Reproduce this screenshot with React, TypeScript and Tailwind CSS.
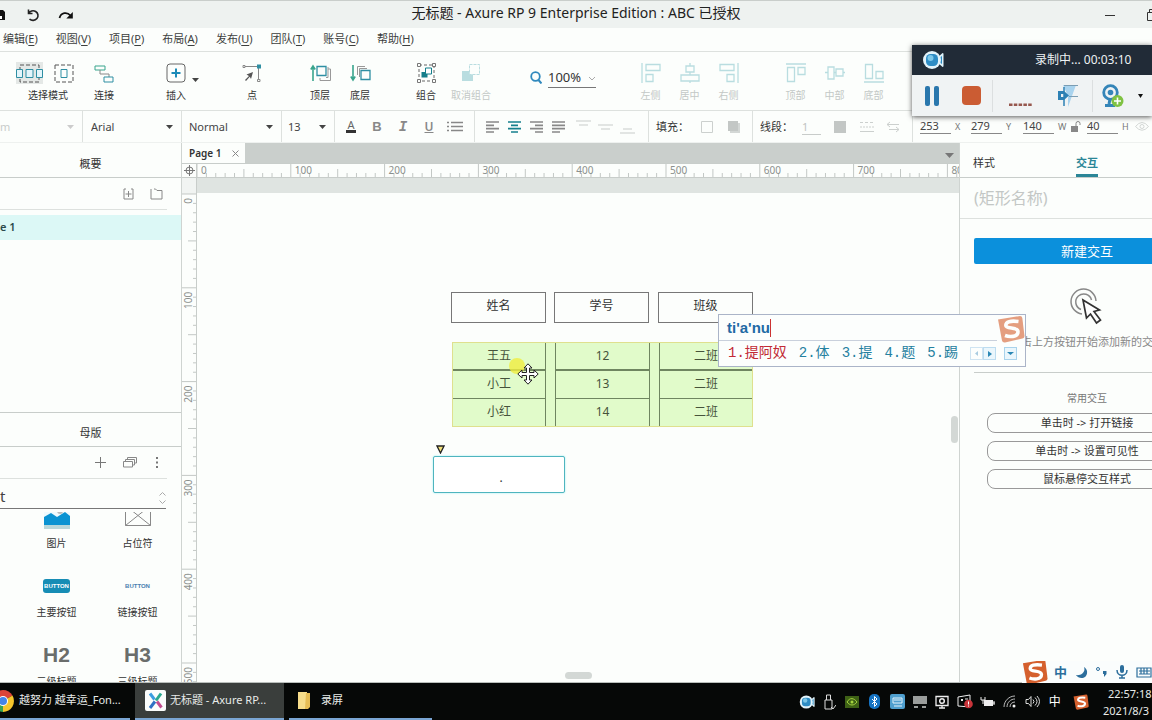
import React from "react";

type Kids = { children?: React.ReactNode };

const Svg = ({ w, h, box, className = "", children }: Kids & { w: number; h: number; box?: string; className?: string }) => (
  <svg width={w} height={h} viewBox={box ?? `0 0 ${w} ${h}`} fill="none" className={`shrink-0 ${className}`} aria-hidden="true">
    {children}
  </svg>
);

const Caret = ({ className = "text-[#444]" }: { className?: string }) => (
  <Svg w={7} h={4} className={className}>
    <path d="M0 0h7L3.500 4z" fill="currentColor" />
  </Svg>
);

/* ---------- Title bar and menu ---------- */

function TitleBar() {
  return (
    <header className="relative flex h-7 shrink-0 items-center border-t border-[#c9cecb] bg-[#eef2f0]">
      <button aria-label="保存" className="w-[5px] overflow-hidden">
        <Svg w={5} h={12}>
          <path d="M-8 1h11l2 2v8H-8z" fill="#111" />
          <path d="M-4 7h6v3h-6z" fill="#fff" />
        </Svg>
      </button>
      <button aria-label="撤销" className="ml-[21px]">
        <Svg w={14} h={14}>
          <path d="M2.500 1.500v4h4M2.500 5.500A5 4.800 0 1 1 3.500 11" stroke="#222" strokeWidth="1.600" />
        </Svg>
      </button>
      <button aria-label="重做" className="ml-[18px]">
        <Svg w={16} h={12}>
          <path d="M1.500 9C3 3.500 9 2.500 12.500 6.500" stroke="#111" strokeWidth="1.800" />
          <path d="M14.800 3v6.500H8.300z" fill="#111" />
        </Svg>
      </button>
      <h1 className="absolute inset-x-0 -top-px text-center text-[14px] leading-[26px] text-[#1f2221]">
        无标题 - Axure RP 9 Enterprise Edition : ABC 已授权
      </h1>
      <div className="ml-auto flex items-center gap-8">
        <button aria-label="最小化">
          <Svg w={10} h={10}><path d="M0 5.500h10" stroke="#333" /></Svg>
        </button>
        <button aria-label="最大化" className="w-[5px] overflow-hidden">
          <Svg w={11} h={12}><path d="M.5 3.500h8v8h-8zM2.500 3V.5h8v8H9" stroke="#333" /></Svg>
        </button>
      </div>
    </header>
  );
}

const MENUS: [string, string][] = [
  ["编辑", "E"], ["视图", "V"], ["项目", "P"], ["布局", "A"],
  ["发布", "U"], ["团队", "T"], ["账号", "C"], ["帮助", "H"],
];

function MenuBar() {
  return (
    <nav className="flex h-6 shrink-0 items-center gap-[18px] border-b border-[#dde1de] pl-[3px] text-[11px] text-[#3c3f3e]">
      {MENUS.map(([name, key]) => (
        <button key={key} className="whitespace-nowrap">
          {name}(<u className="underline-offset-2">{key}</u>)
        </button>
      ))}
    </nav>
  );
}

/* ---------- Main toolbar ---------- */

function Tool({ label, className, disabled, children }: Kids & { label: string; className: string; disabled?: boolean }) {
  return (
    <button disabled={disabled} className={`flex shrink-0 flex-col items-center gap-1 ${className} ${disabled ? "text-[#c3c8c6]" : "text-[#333]"}`}>
      <span className="flex h-[22px] items-center">{children}</span>
      <span className="whitespace-nowrap text-[10px] leading-[14px]">{label}</span>
    </button>
  );
}

const T = "#2f8fa3";
const P = "#b9dde0";

function Toolbar() {
  return (
    <div className="flex h-[59px] shrink-0 items-start border-b border-[#dde1de] pl-4 pt-[10px]">
      <div className="flex w-16 shrink-0 flex-col items-center gap-1 text-[10px] text-[#333]">
        <div className="flex w-full items-center gap-[11px]">
          <button aria-label="相交选择" className="flex h-[22px] bg-[#e4e8e6]">
            <Svg w={27} h={22}>
              <path d="M4 3h19v17H4z" stroke="#555" strokeDasharray="4 2" />
              <path d="M.5 7.500h6v8h-6zM10 7.500h7v8h-7zM20.500 7.500h6v8h-6z" fill="#e3f5fb" stroke={T} />
            </Svg>
          </button>
          <button aria-label="包含选择" className="flex h-[22px]">
            <Svg w={20} h={22}>
              <path d="M1 3h18v17H1z" stroke="#555" strokeDasharray="4 2" />
              <path d="M7 7.500h6v8H7z" stroke={T} />
            </Svg>
          </button>
        </div>
        <span className="leading-[14px]">选择模式</span>
      </div>
      <Tool label="连接" className="ml-1 w-10">
        <Svg w={20} h={19}>
          <path d="M1 2h10v4H1z" stroke="#39a58d" />
          <path d="M6 6v4h9v3" stroke="#888" />
          <path d="M10 13h9v5h-9z" stroke={T} />
        </Svg>
      </Tool>
      <Tool label="插入" className="ml-9 w-8">
        <Svg w={20} h={20}>
          <rect x="1" y="1" width="18" height="18" rx="3" stroke="#666" />
          <path d="M10 5.500v9M5.500 10h9" stroke="#1c8bb8" strokeWidth="2" />
        </Svg>
      </Tool>
      <button aria-label="插入选项" className="mt-4"><Caret /></button>
      <Tool label="点" className="ml-[33px] w-10">
        <Svg w={20} h={20}>
          <path d="M3 3.500h13.500V16" stroke="#888" />
          <path d="M1 2.500h2v2H1zM15.500 16.500h2.500v2h-2.500z" stroke="#888" />
          <path d="M15 1.500h4v4h-4z" fill={T} />
          <path d="M3 17l4-4-2.500-1.500L11 9l-2 7-1.200-2.200L4 18z" fill="#555" />
        </Svg>
      </Tool>
      <Tool label="顶层" className="ml-7 w-10">
        <Svg w={21} h={18}>
          <path d="M3 17V3M.8 5.500L3 2l2.200 3.500" stroke="#39a58d" strokeWidth="1.600" />
          <path d="M18 5h2.500v11.500H10V14M16 13.500h2V3" stroke="#999" />
          <path d="M7 2.500h9v9H7z" stroke={T} strokeWidth="1.300" />
        </Svg>
      </Tool>
      <Tool label="底层" className="w-10">
        <Svg w={21} h={18}>
          <path d="M3 1v14M.8 12.500L3 16l2.200-3.500" stroke="#39a58d" strokeWidth="1.600" />
          <path d="M7.500 11V2.500H15M9.500 13V4.500H17" stroke="#999" />
          <path d="M11 6.500h9v9h-9z" stroke={T} strokeWidth="1.300" />
        </Svg>
      </Tool>
      <Tool label="组合" className="ml-[26px] w-10">
        <Svg w={19} h={20}>
          <path d="M2 2h15v16H2z" stroke="#666" strokeDasharray="3 2" />
          <path d="M.5.500h3v3h-3zM15.500.500h3v3h-3zM.5 16.500h3v3h-3zM15.500 16.500h3v3h-3z" fill="#fcfefc" stroke="#777" />
          <path d="M4.500 9h6v5.500h-6z" fill="#157f8b" />
          <path d="M8.500 5h6v6h-6z" fill="#fff" stroke="#157f8b" />
        </Svg>
      </Tool>
      <Tool label="取消组合" className="w-[50px]" disabled>
        <Svg w={20} h={20}>
          <path d="M1 8h11v10H1z" fill={P} />
          <path d="M8.500 1.500h10v10h-10z" fill="#fcfefc" stroke={P} strokeDasharray="3 1" />
        </Svg>
      </Tool>
      <label className="ml-[34px] mt-1 flex shrink-0 items-center gap-[6px]">
        <Svg w={12} h={13}>
          <circle cx="5.500" cy="5.500" r="4.300" stroke="#3089bd" strokeWidth="1.800" />
          <path d="M8.500 9l3 3.500" stroke="#3089bd" strokeWidth="2" />
        </Svg>
        <span className="sr-only">缩放</span>
        <span className="flex w-12 items-center border-b border-[#777]">
          <select className="h-[21px] w-10 appearance-none bg-transparent text-[13px] leading-[20px] text-[#333]" defaultValue="100%">
            <option>100%</option>
          </select>
          <Svg w={8} h={5} className="mt-1"><path d="M1 1l3 3 3-3" stroke="#aaa" /></Svg>
        </span>
      </label>
      <Tool label="左侧" className="ml-[35px] w-[39px]" disabled>
        <Svg w={20} h={20}><path d="M1 0v20M5 1.500h14v6H5zM5 11.500h7v7H5z" stroke={P} strokeWidth="1.300" /></Svg>
      </Tool>
      <Tool label="居中" className="w-[39px]" disabled>
        <Svg w={20} h={20}><path d="M10 0v3M10 9v3M10 18v2M6 3h8v6H6zM1 12h18v6H1z" stroke={P} strokeWidth="1.300" /></Svg>
      </Tool>
      <Tool label="右侧" className="w-[39px]" disabled>
        <Svg w={20} h={20}><path d="M19 0v20M1 1.500h14v6H1zM8 11.500h7v7H8z" stroke={P} strokeWidth="1.300" /></Svg>
      </Tool>
      <Tool label="顶部" className="ml-7 w-[39px]" disabled>
        <Svg w={20} h={20}><path d="M0 1h20M1.500 4.500h7v14h-7zM12 4.500h7v7h-7z" stroke={P} strokeWidth="1.300" /></Svg>
      </Tool>
      <Tool label="中部" className="w-[39px]" disabled>
        <Svg w={20} h={20}><path d="M0 9.500h3M9 9.500h2M18 9.500h2M3 4h6v12H3zM11 6h7v7h-7z" stroke={P} strokeWidth="1.300" /></Svg>
      </Tool>
      <Tool label="底部" className="w-[39px]" disabled>
        <Svg w={20} h={20}><path d="M0 19h20M1.500 1.500h7v14h-7zM12 8.500h7v7h-7z" stroke={P} strokeWidth="1.300" /></Svg>
      </Tool>
    </div>
  );
}

/* ---------- Format bar ---------- */

function Pick({ label, value, className, faint }: { label: string; value: string; className: string; faint?: boolean }) {
  return (
    <label className={`flex h-full shrink-0 items-center border-r border-[#dde1de] pr-2 ${className}`}>
      <span className="sr-only">{label}</span>
      <select defaultValue={value} className={`h-5 min-w-0 flex-1 appearance-none bg-transparent text-[11px] leading-5 ${faint ? "text-[#c8ccca]" : "text-[#444]"}`}>
        <option>{value}</option>
      </select>
      <Caret className={faint ? "text-[#ccc]" : "text-[#444]"} />
    </label>
  );
}

function Fmt({ label, className, children }: Kids & { label: string; className: string }) {
  return (
    <button aria-label={label} className={`flex h-full shrink-0 items-center justify-center ${className}`}>
      {children}
    </button>
  );
}

function Num({ label, value, className }: { label: string; value: string; className: string }) {
  return (
    <label className={`flex shrink-0 items-baseline gap-1 text-[9px] leading-4 text-[#777] ${className}`}>
      <input defaultValue={value} className="h-4 w-[31px] border-b border-[#888] bg-transparent text-[11px] leading-[15px] text-[#444]" />
      {label}
    </label>
  );
}

const ALIGN: [string, string, string][] = [
  ["左对齐", "M0 1h13M0 4.300h8M0 7.600h13M0 11h8", "#888"],
  ["居中对齐", "M0 1h13M3 4.300h7M0 7.600h13M3 11h7", "#16808d"],
  ["右对齐", "M0 1h13M5 4.300h8M0 7.600h13M5 11h8", "#888"],
  ["两端对齐", "M0 1h13M0 4.300h13M0 7.600h13M0 11h8", "#888"],
];
const VALIGN: [string, string][] = [
  ["顶端", "M0 1h15M3 5h9"],
  ["中间", "M0 5h15M3 9h9"],
  ["底端", "M3 9h9M0 13h15"],
];

function FormatBar() {
  return (
    <div className="flex h-8 shrink-0 items-center overflow-hidden border-b border-[#eef1ef]">
      <Pick label="控件样式" value="m" className="w-[83px]" faint />
      <Pick label="字体" value="Arial" className="w-[99px] pl-2" />
      <Pick label="字重" value="Normal" className="w-[100px] pl-[7px]" />
      <Pick label="字号" value="13" className="w-[53px] pl-[6px]" />
      <div className="flex h-full w-[140px] shrink-0 border-r border-[#dde1de] pl-[3px]">
        <Fmt label="文字颜色" className="w-[26px]">
          <span className="border-b-[3px] border-[#333] px-px text-[11px] leading-[10px] text-[#666]">A</span>
        </Fmt>
        <Fmt label="粗体" className="w-[26px]"><b className="font-[Liberation_Sans] text-[13px] leading-5 text-[#888]">B</b></Fmt>
        <Fmt label="斜体" className="w-[26px]"><i className="font-[Liberation_Mono] text-[14px] font-bold leading-5 text-[#888]">I</i></Fmt>
        <Fmt label="下划线" className="w-[26px]"><u className="text-[12px] font-semibold leading-5 text-[#888]">U</u></Fmt>
        <Fmt label="项目符号" className="w-[26px]">
          <Svg w={16} h={11}>
            <path d="M0 1.500h2M0 5.500h2M0 9.500h2M4 1.500h12M4 5.500h12M4 9.500h12" stroke="#888" strokeWidth="1.600" />
          </Svg>
        </Fmt>
      </div>
      <div className="flex h-full w-[174px] shrink-0 border-r border-[#dde1de] pl-[6px]">
        {ALIGN.map(([n, d, c]) => (
          <Fmt key={n} label={n} className="w-[22px]">
            <Svg w={13} h={12}><path d={d} stroke={c} strokeWidth="1.700" /></Svg>
          </Fmt>
        ))}
        <span className="w-[3px]" />
        {VALIGN.map(([n, d]) => (
          <Fmt key={n} label={n} className="w-[22px]">
            <Svg w={15} h={14}><path d={d} stroke="#c8ccca" /></Svg>
          </Fmt>
        ))}
      </div>
      <div className="flex h-full w-[104px] shrink-0 items-center border-r border-[#dde1de] pl-[7px] text-[11px] leading-5 text-[#333]">
        <span className="w-[45px]">填充：</span>
        <Fmt label="填充颜色" className="w-3"><Svg w={12} h={12}><path d="M.5.500h11v11H.5z" stroke="#ccd0ce" /></Svg></Fmt>
        <Fmt label="阴影" className="ml-[15px] w-3"><Svg w={12} h={12}><path d="M0 0h10v10H0z" fill="#c3c7c5" /><path d="M2 11h9V2" stroke="#d3d7d5" strokeWidth="2" /></Svg></Fmt>
      </div>
      <div className="flex h-full w-[160px] shrink-0 items-center border-r border-[#dde1de] pl-[7px] text-[11px] leading-5 text-[#333]">
        <span className="w-[42px]">线段：</span>
        <input aria-label="线宽" defaultValue="1" className="h-4 w-[19px] border-b border-[#c8ccca] bg-transparent leading-[15px] text-[#c0c4c2]" />
        <Fmt label="线条颜色" className="ml-[13px] w-3"><Svg w={12} h={12}><path d="M0 0h12v12H0z" fill="#c3c7c5" /></Svg></Fmt>
        <Fmt label="线型" className="ml-[14px] w-[14px]">
          <Svg w={14} h={12}><path d="M0 1.500h14" stroke="#ccd0ce" strokeDasharray="3 2" /><path d="M0 6h14" stroke="#ccd0ce" strokeDasharray="2 1" /><path d="M0 10.500h14" stroke="#ccd0ce" /></Svg>
        </Fmt>
        <Fmt label="箭头" className="ml-3 w-[14px]">
          <Svg w={14} h={12}><path d="M4 1L1 3.500 4 6M1 3.500h12M10 6l3 2.500-3 2.500M13 8.500H3" stroke="#ccd0ce" /></Svg>
        </Fmt>
      </div>
      <div className="flex shrink-0 items-center pl-[7px]">
        <Num label="X" value="253" className="w-[51px]" />
        <Num label="Y" value="279" className="w-[52px]" />
        <Num label="W" value="140" className="w-12" />
        <Fmt label="锁定宽高比" className="mr-[6px] w-[10px]">
          <Svg w={10} h={11}><path d="M0 5h7v6H0z" fill="#888" /><path d="M5 5V2.500a2 2 0 0 1 4 0V4" stroke="#888" /></Svg>
        </Fmt>
        <Num label="H" value="40" className="w-[48px]" />
        <Fmt label="可见性" className="w-[14px]">
          <Svg w={14} h={9}><path d="M.5 4.500Q7-3.500 13.500 4.500 7 12 .5 4.500z" stroke="#d3d7d5" /><circle cx="7" cy="4.500" r="2" stroke="#d3d7d5" /></Svg>
        </Fmt>
      </div>
    </div>
  );
}

/* ---------- Left panels ---------- */

function Widget({ label, children }: Kids & { label: string }) {
  return (
    <button className="flex h-[69px] w-[81px] flex-col items-center pt-[13px]">
      <span className="flex h-10 items-center">{children}</span>
      <span className="whitespace-nowrap text-[10px] leading-3 text-[#333]">{label}</span>
    </button>
  );
}

function LeftPanel() {
  return (
    <aside className="flex w-[182px] shrink-0 flex-col overflow-hidden border-r border-[#cfd4d1]">
      <section className="flex min-h-0 flex-1 flex-col">
        <h2 className="flex h-[35px] shrink-0 items-center justify-center border-b border-[#c8cdca] pt-2 text-[11px] leading-4 text-[#333]">概要</h2>
        <div className="mr-[14px] flex h-8 shrink-0 items-center justify-end gap-4 border-b border-[#dde1de] pr-[4px]">
          <button aria-label="添加页面">
            <Svg w={11} h={12}><path d="M3 1H1v10h9V1H8M5.500 3v6M2.500 6h6" stroke="#888" /></Svg>
          </button>
          <button aria-label="添加文件夹">
            <Svg w={13} h={12}><path d="M1 1v10h11V2.500H7L5.500 1H4" stroke="#888" /></Svg>
          </button>
        </div>
        <a href="#page-1" className="mt-[5px] block h-[25px] shrink-0 bg-[#dcf8f6] text-[11px] font-semibold leading-[24px] text-[#2b4a4b]">e 1</a>
      </section>
      <section className="flex h-[270px] shrink-0 flex-col border-t border-[#c8cdca]">
        <h2 className="flex h-[34px] shrink-0 items-center justify-center border-b border-[#c8cdca] pt-[6px] text-[11px] leading-4 text-[#333]">母版</h2>
        <div className="mr-[14px] flex h-8 shrink-0 items-center justify-end gap-[17px] border-b border-[#dde1de] pr-[8px]">
          <button aria-label="添加母版"><Svg w={11} h={11}><path d="M5.500 0v11M0 5.500h11" stroke="#777" /></Svg></button>
          <button aria-label="添加母版文件夹">
            <Svg w={14} h={11}><path d="M.5 4.500h9v5.500h-9zM2.500 4V2.500h9V8H10M4.500 2V.500h9V6H12" stroke="#888" /></Svg>
          </button>
          <button aria-label="更多"><Svg w={5} h={11}><path d="M2 0h2v2H2zM2 4.500h2v2H2zM2 9h2v2H2z" fill="#777" /></Svg></button>
        </div>
        <label className="mr-[15px] flex h-[30px] shrink-0 items-center border-b border-[#777]">
          <span className="sr-only">元件库</span>
          <select defaultValue="t" className="mt-1 h-6 flex-1 appearance-none bg-transparent text-[15px] leading-6 text-[#444]"><option>t</option></select>
          <Svg w={7} h={12} className="mt-2"><path d="M.5 3.500l3-3 3 3M.5 8.500l3 3 3-3" stroke="#aaa" /></Svg>
        </label>
        <div className="mt-[3px] min-h-0 flex-1 overflow-hidden">
          <div className="-mt-7 grid grid-cols-[81px_81px] pl-4">
            <Widget label="图片">
              <Svg w={26} h={26}>
                <path d="M0 6h26v18H0z" fill="#f0fafd" /><path d="M0 13l7-4 6 4 8-5 5 4v11H0z" fill="#0b93d2" />
                <circle cx="16" cy="7" r="3" fill="#bbb" /><path d="M0 21h26v4H0z" fill="#b9d7da" />
              </Svg>
            </Widget>
            <Widget label="占位符">
              <Svg w={26} h={24}><path d="M.5.500h25v20H.5zM.5.500l25 20M25.500.500l-25 20" stroke="#888" /></Svg>
            </Widget>
            <Widget label="主要按钮">
              <span className="flex h-[14px] w-[27px] items-center justify-center rounded-[3px] bg-[#178db5] font-[Liberation_Sans] text-[6px] font-bold leading-[14px] text-white">BUTTON</span>
            </Widget>
            <Widget label="链接按钮">
              <span className="font-[Liberation_Sans] text-[6px] font-bold leading-[14px] text-[#4b7fb0]">BUTTON</span>
            </Widget>
            <Widget label="二级标题"><b className="font-[Liberation_Sans] text-[21px] text-[#6a6d6b]">H2</b></Widget>
            <Widget label="三级标题"><b className="font-[Liberation_Sans] text-[21px] text-[#6a6d6b]">H3</b></Widget>
          </div>
        </div>
      </section>
    </aside>
  );
}

/* ---------- Canvas ---------- */

const UNIT = 9.38;

function TopRuler() {
  return (
    <svg className="h-[15px] min-w-0 flex-1" aria-hidden="true">
      {Array.from({ length: 140 }, (_, i) => {
        const x = i * UNIT;
        const len = i % 10 === 0 ? 15 : i % 5 === 0 ? 8 : 4;
        return <path key={i} d={`M${x} 13v-${len}`} stroke="#c3c8c5" />;
      })}
      {Array.from({ length: 14 }, (_, i) => (
        <text key={i} x={i * UNIT * 10 + 4} y="10" fontSize="10" fill="#8b908d">{i * 100}</text>
      ))}
    </svg>
  );
}

function SideRuler() {
  return (
    <svg className="w-[15px] shrink-0 border-r border-[#c8cdca]" height="100%" aria-hidden="true">
      <path d="M0 0h15v16H0z" fill="#f1f4f2" />
      {Array.from({ length: 80 }, (_, i) => {
        const y = 16 + i * UNIT;
        const len = i % 10 === 0 ? 15 : i % 5 === 0 ? 9 : 4;
        return <path key={i} d={`M15 ${y}h-${len}`} stroke="#c3c8c5" />;
      })}
      {Array.from({ length: 8 }, (_, i) => (
        <text key={i} transform={`translate(10 ${20 + i * UNIT * 10}) rotate(-90)`} textAnchor="end" fontSize="10" fill="#8b908d">{i * 100}</text>
      ))}
    </svg>
  );
}

const ROWS = [["王五", "12", "二班"], ["小工", "13", "二班"], ["小红", "14", "二班"]];

function Canvas() {
  return (
    <main className="flex min-w-0 flex-1 flex-col">
      <div className="flex h-5 shrink-0 items-stretch bg-[#cacfcc]">
        <div className="flex w-[63px] items-center justify-between bg-[#fcfefc] pl-[7px] pr-[6px]">
          <button className="whitespace-nowrap text-[10px] font-semibold leading-4 text-[#333]">Page 1</button>
          <button aria-label="关闭页面"><Svg w={7} h={7} className="mt-px"><path d="M.5.500l6 6M6.500.500l-6 6" stroke="#888" /></Svg></button>
        </div>
        <button aria-label="页面列表" className="ml-auto mr-[5px] mt-1"><Svg w={9} h={5}><path d="M0 0h9L4.500 5z" fill="#777" /></Svg></button>
      </div>
      <div className="flex h-[15px] shrink-0 border-y border-[#c8cdca]">
        <div className="flex w-[15px] shrink-0 items-center justify-center border-r border-[#c8cdca]">
          <Svg w={11} h={11}><circle cx="5.500" cy="5.500" r="3.500" stroke="#777" /><path d="M5.500 0v11M0 5.500h11" stroke="#777" /></Svg>
        </div>
        <TopRuler />
      </div>
      <div className="flex min-h-0 flex-1">
        <SideRuler />
        <div className="relative min-w-0 flex-1 overflow-hidden border-t-[15px] border-[#dfe4e1]">
          {/* free canvas: every node sits at its document position */}
          <div className="absolute left-[254px] top-[99px] flex h-[31px] w-[95px] items-center justify-center border border-[#777] pb-1 text-[12px] text-[#333]">姓名</div>
          <div className="absolute left-[357px] top-[99px] flex h-[31px] w-[95px] items-center justify-center border border-[#777] pb-1 text-[12px] text-[#333]">学号</div>
          <div className="absolute left-[461px] top-[99px] flex h-[31px] w-[95px] items-center justify-center border border-[#777] pb-1 text-[12px] text-[#333]">班级</div>
          <table className="absolute left-[255px] top-[149px] w-[301px] table-fixed border-separate border-spacing-0 border border-[#dfe08e] bg-[#e1fbca] text-center text-[12px] leading-[26px] text-[#46533b]">
            <colgroup><col className="w-[102px]" /><col className="w-[104px]" /><col className="w-[93px]" /></colgroup>
            <tbody>
              {ROWS.map((row, r) => (
                <tr key={r}>
                  {row.map((cell, c) => (
                    <td key={c} className={`p-0 ${c < 2 ? "pr-[9px]" : ""}`}>
                      <div className={`border-[#6f8560] ${c < 2 ? "border-r" : ""} ${c > 0 ? "border-l" : ""} ${r === 0 ? "border-b-2" : r === 1 ? "h-7 border-b" : "h-[27px]"}`}>{cell}</div>
                    </td>
                  ))}
                </tr>
              ))}
            </tbody>
          </table>
          <Svg w={9} h={9} className="absolute left-[239px] top-[252px]"><path d="M1 1h7L4.500 8z" fill="#f3e27a" stroke="#222" strokeWidth="1.300" /></Svg>
          <div className="absolute left-[236px] top-[263px] flex h-[37px] w-[132px] items-center justify-center rounded-[2px] border border-[#4fb5bf] bg-white pl-1 pt-[6px] text-[12px] text-[#333] shadow-[0_0_2px_#8feaf0]">.</div>
          <span className="absolute left-[312px] top-[165px] size-4 rounded-full bg-[#f0ee3e]/80" />
          <Svg w={22} h={22} className="absolute left-[320px] top-[170px]">
            <path d="M11 .8l4 4.200h-2.500v4.500H17V7l4.200 4-4.200 4v-2.500h-4.500V17H15l-4 4.200L7 17h2.500v-4.500H5V15L.8 11 5 7v2.500h4.500V5H7z" fill="#fff" stroke="#222" />
          </Svg>
          <span className="absolute right-[1px] top-[223px] h-[27px] w-[7px] rounded-sm bg-[#d3d8d5]" />
          <span className="absolute bottom-[3px] left-[368px] h-[7px] w-[27px] rounded-sm bg-[#d3d8d5]" />
        </div>
      </div>
    </main>
  );
}

/* ---------- Interaction panel ---------- */

function RightPanel() {
  return (
    <aside className="w-[193px] shrink-0 overflow-hidden border-l border-[#cfd4d1]">
      <div className="w-[254px]">
        <div className="flex h-[35px] items-end border-b border-[#c8cdca] pl-[13px] text-[11px] leading-4">
          <button className="pb-[6px] text-[#333]">样式</button>
          <button className="ml-[81px] border-b-[3px] border-[#2b8697] pb-[3px] font-semibold text-[#2b8697]">交互</button>
        </div>
        <div className="border-b border-[#dde1de] pl-[14px]">
          <input aria-label="形状名称" placeholder="(矩形名称)" className="h-10 w-full bg-transparent text-[16px] placeholder:text-[#c3c7c5]" />
        </div>
        <div className="pl-[14px] pt-[19px]">
          <button className="-mr-px block h-[26px] w-[226px] rounded-[2px] bg-[#0b90dc] text-[13px] leading-[26px] text-white">新建交互</button>
        </div>
        <div className="flex flex-col items-center pt-6">
          <Svg w={36} h={38}>
            <path d="M13 26A12.500 12.500 0 1 1 27 13" stroke="#888" strokeWidth="1.500" />
            <path d="M12 21.500A8 8 0 1 1 22.500 12" stroke="#888" strokeWidth="1.500" />
            <path d="M14 12l3.500 18 4-4 6 9 4-3-6.500-8.500 5.500-1.500z" fill="#fff" stroke="#333" strokeWidth="1.700" />
          </Svg>
          <p className="mt-2 text-[11px] leading-4 text-[#888]">点击上方按钮开始添加新的交互</p>
        </div>
        <hr className="ml-[14px] mt-[22px] border-[#c8cdca]" />
        <h3 className="mt-[17px] text-center text-[10px] leading-4 text-[#777]">常用交互</h3>
        <div className="ml-[27px] mt-[7px] flex w-[200px] flex-col gap-2 text-[11px] leading-[18px] text-[#333]">
          <button className="rounded-lg border border-[#999]">单击时 -&gt; 打开链接</button>
          <button className="rounded-lg border border-[#999]">单击时 -&gt; 设置可见性</button>
          <button className="rounded-lg border border-[#999]">鼠标悬停交互样式</button>
        </div>
      </div>
    </aside>
  );
}

/* ---------- Floating windows ---------- */

function Camera({ size }: { size: number }) {
  return (
    <Svg w={size} h={size} box="0 0 22 22">
      <path d="M14 10l6.500-6q1 0 1 1v12q0 1-1 1L14 12z" fill="#dff3fb" />
      <path d="M17 9l3-2v8l-3-2z" fill="#2e8cc4" />
      <circle cx="10" cy="11" r="9" fill="#e3f3fa" />
      <rect x="4" y="5" width="12" height="12" rx="4.500" fill="#2e8cc4" />
      <circle cx="8.500" cy="9" r="3" fill="#7cc7e8" />
    </Svg>
  );
}

function Recorder() {
  return (
    <section aria-label="录制" className="absolute right-0 top-[45px] w-60 overflow-hidden bg-[#f0f3f4] shadow-[0_1px_5px_#555]">
      <div className="flex h-[30px] items-center bg-[#212b37] pl-[10px] text-[12px] text-[#eef2f4]">
        <Camera size={22} />
        <span className="ml-[91px] whitespace-nowrap">录制中... 00:03:10</span>
      </div>
      <div className="flex h-[41px] items-center pl-[13px]">
        <button aria-label="暂停"><Svg w={14} h={20}><rect width="5" height="20" rx="2" fill="#2a77ad" /><rect x="9" width="5" height="20" rx="2" fill="#2a77ad" /></Svg></button>
        <button aria-label="停止" className="ml-[23px] size-[19px] rounded-[4px] bg-[#cb5c33]" />
        <span className="ml-[11px] h-8 w-px bg-[#dcdfe0]" />
        <Svg w={23} h={20} className="ml-4"><path d="M0 19h23" stroke="#96574d" strokeWidth="3" strokeDasharray="3.500 1.300" /></Svg>
        <button aria-label="标注" className="ml-[25px]">
          <Svg w={22} h={24}>
            <path d="M6 1h13L11 23V12z" fill="#a9d3ee" /><path d="M7 1.500h14M12 12.500h9" stroke="#7b9db3" />
            <path d="M1 7h6l5 4.500L7 16H1z" fill="#2d81b5" /><path d="M4 10h3v3H4z" fill="#f0f3f4" /><path d="M7 3v19" stroke="#2d81b5" strokeWidth="1.500" />
          </Svg>
        </button>
        <span className="ml-[13px] h-8 w-px bg-[#dcdfe0]" />
        <button aria-label="摄像头" className="ml-[9px]">
          <Svg w={22} h={24}>
            <circle cx="8.500" cy="8.500" r="6.800" stroke="#3585b8" strokeWidth="2.800" /><circle cx="8.500" cy="8.500" r="2.800" fill="#3585b8" />
            <path d="M8 15l-1 5M3 21.500h10" stroke="#3585b8" strokeWidth="3" />
            <circle cx="15.500" cy="17" r="6" fill="#7fc242" /><path d="M15.500 13.500v7M12 17h7" stroke="#fff" strokeWidth="1.600" />
          </Svg>
        </button>
        <button aria-label="摄像头选项" className="ml-[14px]"><Svg w={5} h={4}><path d="M0 0h5L2.500 4z" fill="#111" /></Svg></button>
      </div>
    </section>
  );
}

function SogouMark({ size, className = "" }: { size: number; className?: string }) {
  return (
    <Svg w={size} h={size} box="0 0 28 28" className={className}>
      <path d="M1 4.500L23 1q2 0 2.300 2L27.500 21q0 2-2 2.500L8 27.500q-2.500.300-3-2z" fill="#d5602e" />
      <path d="M21.500 6.500Q9 5 8.800 10.200C8.800 14.500 21 11.500 21 16.800 21 22.500 12 22 8 20.500" stroke="#fff" strokeWidth="3.600" />
    </Svg>
  );
}

const CANDIDATES = ["2.体", "3.提", "4.题", "5.踢"];

function ImePopup() {
  return (
    <section aria-label="输入法候选" className="absolute left-[718px] top-[314px] w-[308px] border border-[#aab4c8] bg-[#fcfefd]">
      <div className="flex h-[25px] items-center pl-2">
        <span className="border-r border-[#c33] font-[Liberation_Sans] text-[15px] font-bold leading-[18px] text-[#1f6aa5]">ti'a'nu</span>
      </div>
      <hr className="mr-7 border-[#c9d0dc]" />
      <div className="flex h-[25px] items-center gap-3 whitespace-nowrap pl-[9px] pr-2 font-['Liberation_Mono','Noto_Sans_CJK_SC',monospace] text-[14px] text-[#24809f]">
        <button className="text-[#c22a35]">1.提阿奴</button>
        {CANDIDATES.map((c) => <button key={c}>{c}</button>)}
        <div className="ml-auto flex items-center">
          <button aria-label="上一页" className="flex size-[13px] items-center justify-center border border-[#cfe4f2]"><Svg w={3} h={5}><path d="M3 0v5L0 2.500z" fill="#a9cbe0" /></Svg></button>
          <button aria-label="下一页" className="flex size-[13px] items-center justify-center border border-[#bcdcf0] bg-[#eaf6fc]"><Svg w={4} h={6}><path d="M0 0v6l4-3z" fill="#2a87b5" /></Svg></button>
          <button aria-label="展开" className="ml-2 flex size-[13px] items-center justify-center border border-[#a9d3ec] bg-[#eaf6fc]"><Svg w={7} h={3}><path d="M0 0h7L3.500 3z" fill="#2a87b5" /></Svg></button>
        </div>
      </div>
      <SogouMark size={28} className="absolute right-0 top-0 opacity-60" />
    </section>
  );
}

function ImeBar() {
  return (
    <section aria-label="输入法状态" className="absolute bottom-[37px] right-0 flex h-[22px] w-[130px] items-center overflow-hidden bg-[#fafdfd] text-[#2c6e9c]">
      <SogouMark size={26} />
      <button className="ml-[6px] text-[13px] font-bold leading-5">中</button>
      <button aria-label="月亮" className="ml-2"><Svg w={13} h={13}><path d="M9 1c2 5-3 9-8 8 3 5 12 4 11-4-.5-2-1.500-3-3-4z" fill="currentColor" /></Svg></button>
      <button aria-label="标点" className="ml-2"><Svg w={11} h={12}><circle cx="2" cy="3" r="1.500" stroke="currentColor" /><path d="M7 5h3.500v3L8 11V8H7z" fill="currentColor" /></Svg></button>
      <button aria-label="语音" className="ml-[9px]"><Svg w={12} h={14}><rect x="4" width="4" height="8" rx="2" fill="currentColor" /><path d="M1 5c0 7 10 7 10 0M6 10v3M3 13h6" stroke="currentColor" strokeWidth="1.500" /></Svg></button>
      <button aria-label="键盘" className="ml-2"><Svg w={16} h={12}><path d="M1 2h14v9H1zM3 5h11M3 8h11M5 2v6M8 2v6M11 2v6" stroke="currentColor" strokeWidth="1.200" /></Svg></button>
    </section>
  );
}

/* ---------- Taskbar ---------- */

function Tray() {
  return (
    <div className="flex w-[270px] shrink-0 items-center justify-between text-white *:flex *:w-[22px] *:justify-center">
      <button aria-label="录屏"><Camera size={16} /></button>
      <button aria-label="USB"><Svg w={13} h={16}><path d="M2 6h7v9H2zM3.500 6V1h4v5M8 13l2 2 3-4" stroke="#ddd" /></Svg></button>
      <button aria-label="NVIDIA"><Svg w={14} h={12}><path d="M0 0h14v12H0z" fill="#3e6116" /><path d="M2 6c3-5 7-4 10 0-3 4-7 4-10 0z" stroke="#a5d33f" /><circle cx="7" cy="6" r="1.500" fill="#a5d33f" /></Svg></button>
      <button aria-label="蓝牙"><Svg w={11} h={15}><rect width="11" height="15" rx="5" fill="#1673c2" /><path d="M3 5l5 5-2.500 2.500v-10L8 5l-5 5" stroke="#fff" /></Svg></button>
      <button aria-label="消息"><Svg w={15} h={15}><rect width="15" height="15" rx="2" fill="#4f9fce" /><path d="M3 4h9v5H3zM4 12h8M4 6h7" stroke="#e5f3fb" /></Svg></button>
      <button aria-label="设备"><Svg w={14} h={14}><path d="M0 1h14v8H0z" fill="#9a9d9b" /><path d="M1 11h4v2H1zM9 11h4v2H9z" fill="#9a9d9b" /></Svg></button>
      <button aria-label="设置"><Svg w={14} h={14}><path d="M1 1.500h12v9H1zM4 13h6M7 10.500V13" stroke="#eee" strokeWidth="1.300" /><circle cx="7" cy="6" r="2.300" stroke="#eee" strokeWidth="1.500" /></Svg></button>
      <button aria-label="警告"><Svg w={16} h={15}><path d="M1 3l12-2v12L1 12z" stroke="#eee" /><path d="M4 5l2 2M6 5L4 7M8 5h3" stroke="#eee" /><circle cx="11.500" cy="10" r="4.300" fill="#c9343a" /><path d="M11.500 7.500v3M11.500 11.500v1" stroke="#fff" /></Svg></button>
      <button aria-label="电池"><Svg w={15} h={12}><path d="M4 4h9v6H4z" fill="#eee" /><path d="M13 6h2v2h-2zM1 1v3h4V1M3 4v4" stroke="#eee" /></Svg></button>
      <button aria-label="网络"><Svg w={13} h={13}><path d="M1 12C1 6 6 1 12 1M4 12c0-5 4-8 8-8M7 12c0-3 2-5 5-5" stroke="#bbb" /><circle cx="11" cy="11" r="1.500" fill="#eee" /></Svg></button>
      <button aria-label="音量"><Svg w={15} h={13}><path d="M1 4.500h2.500L6 1.500v10L3.500 8.500H1zM8 4.500q2 2 0 4M10 2.500q4 4 0 8M12 1q5 5.500 0 11" stroke="#ddd" /></Svg></button>
      <button className="text-[12px]">中</button>
    </div>
  );
}

function Taskbar() {
  return (
    <footer className="flex h-[38px] shrink-0 items-stretch border-t border-[#b9bebb] bg-[#060807] text-[11px] text-[#e8ebe9]">
      <button className="flex w-[130px] items-center gap-[5px] overflow-hidden whitespace-nowrap border-b-2 border-[#7aa5d3]">
        <Svg w={14} h={22} box="8 0 14 22">
          <path d="M11 11L1.500 5.500A11 11 0 0 1 20.500 5.500z" fill="#dc4437" />
          <path d="M11 11l9.500-5.500A11 11 0 0 1 11 22z" fill="#f5c52c" />
          <path d="M11 11v11A11 11 0 0 1 1.500 5.500z" fill="#37a254" />
          <circle cx="11" cy="11" r="5" fill="#fff" /><circle cx="11" cy="11" r="4" fill="#4484e8" />
        </Svg>
        越努力 越幸运_Fon...
      </button>
      <button className="ml-[5px] flex w-[149px] items-center gap-1 whitespace-nowrap border-b-2 border-[#7aa5d3] bg-[#3a3e3c] pl-[10px]">
        <Svg w={21} h={21}>
          <rect width="21" height="21" rx="2" fill="#fbfdfc" />
          <path d="M5 3.500l4.500 6" stroke="#3b9de0" strokeWidth="3" /><path d="M16 3.500l-5 7" stroke="#2aa88f" strokeWidth="3" />
          <path d="M10 11.500l-5 6.500" stroke="#2e71c4" strokeWidth="3" /><path d="M12 11.500l4.500 6" stroke="#c24d8f" strokeWidth="3" />
        </Svg>
        无标题 - Axure RP...
      </button>
      <button className="ml-[5px] flex w-[143px] items-center gap-[9px] border-b-2 border-[#7aa5d3] pl-2">
        <Svg w={15} h={19}><path d="M1 1h9v17H1z" fill="#f7dd8b" /><path d="M9 2h4v14l-2 2H8z" fill="#e7bd55" /></Svg>
        录屏
      </button>
      <div className="ml-auto flex w-[356px] items-center overflow-hidden">
        <Tray />
        <button aria-label="搜狗输入法" className="ml-[7px] shrink-0"><SogouMark size={16} /></button>
        <time className="ml-[14px] w-16 shrink-0 whitespace-nowrap text-left leading-[17px]">
          <span className="ml-[5px]">22:57:18</span><br />2021/8/3
        </time>
      </div>
    </footer>
  );
}

export default function App() {
  return (
    <div className="relative flex h-screen w-full flex-col overflow-hidden bg-[#fcfefc] font-['Noto_Sans','Noto_Sans_CJK_SC',sans-serif]">
      <TitleBar />
      <MenuBar />
      <Toolbar />
      <FormatBar />
      <div className="flex min-h-0 flex-1">
        <LeftPanel />
        <Canvas />
        <RightPanel />
      </div>
      <Taskbar />
      <Recorder />
      <ImePopup />
      <ImeBar />
    </div>
  );
}
